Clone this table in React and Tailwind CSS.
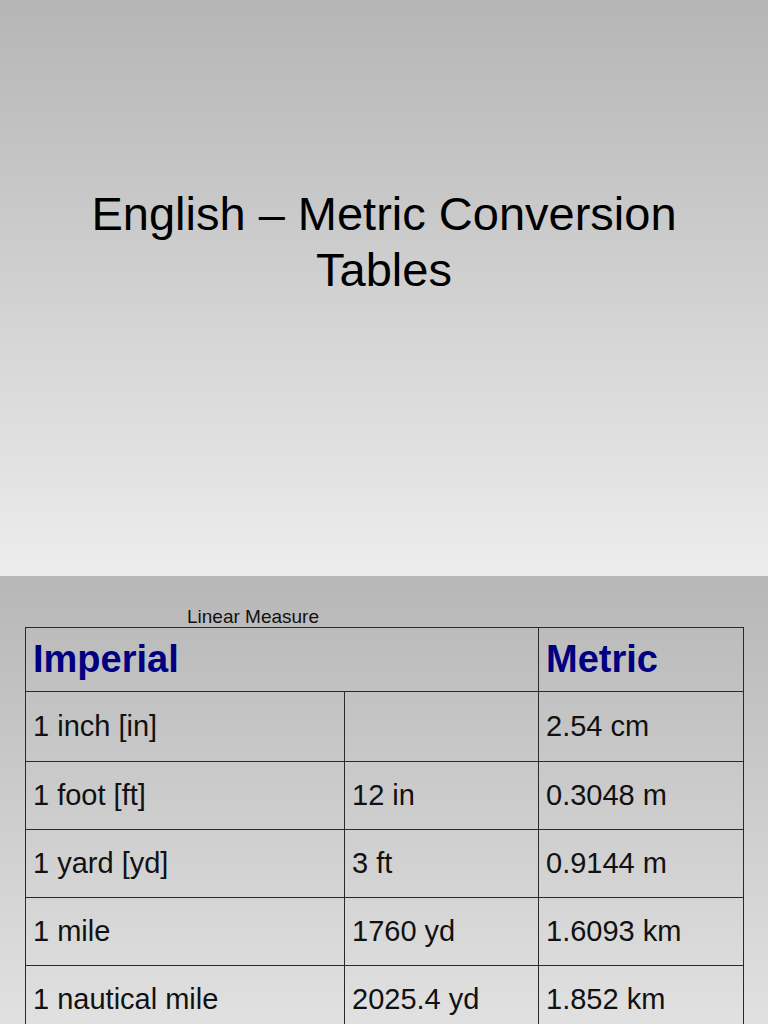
export default function App() {
  const rows = [
    ["1 inch [in]", "", "2.54 cm", "h-[70px]"],
    ["1 foot [ft]", "12 in", "0.3048 m", "h-[68px]"],
    ["1 yard [yd]", "3 ft", "0.9144 m", "h-[68px]"],
    ["1 mile", "1760 yd", "1.6093 km", "h-[68px]"],
    ["1 nautical mile", "2025.4 yd", "1.852 km", "h-[68px]"],
  ];
  const cell = "border border-[#2a2a2a] px-[7px] align-middle text-[29px] text-[#111] font-normal";
  return (
    <div className="w-[768px] h-[1024px] overflow-hidden" style={{ fontFamily: '"Liberation Sans", Arial, sans-serif' }}>
      <section className="h-[576px] bg-gradient-to-b from-[#b5b5b5] to-[#ededed] pt-[186px]">
        <h1 className="text-center text-[47px] leading-[56px] text-black font-normal">
          English – Metric Conversion
          <br />
          Tables
        </h1>
      </section>
      <section className="h-[576px] bg-gradient-to-b from-[#b7b7b7] to-[#ededed] pt-[31px]">
        <div className="pl-[187px] text-[19px] leading-[20px] text-[#111]">Linear Measure</div>
        <table className="ml-[25px] w-[718px] table-fixed border-collapse border border-[#484848]">
          <colgroup>
            <col className="w-[319px]" />
            <col className="w-[194px]" />
            <col className="w-[205px]" />
          </colgroup>
          <tbody>
            <tr className="h-[64px]">
              <td colSpan={2} className="border border-[#2a2a2a] px-[7px] align-middle text-[38px] font-bold text-[#000080]">
                Imperial
              </td>
              <td className="border border-[#2a2a2a] px-[7px] align-middle text-[38px] font-bold text-[#000080]">
                Metric
              </td>
            </tr>
            {rows.map((r) => (
              <tr key={r[0]} className={r[3]}>
                <td className={cell}>{r[0]}</td>
                <td className={cell}>{r[1]}</td>
                <td className={cell}>{r[2]}</td>
              </tr>
            ))}
          </tbody>
        </table>
      </section>
    </div>
  );
}
